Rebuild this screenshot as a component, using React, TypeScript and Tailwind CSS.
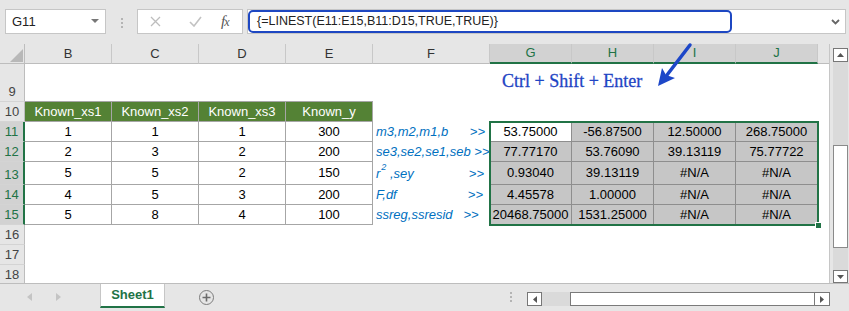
const cols = [
  { key: "B", w: "w-[87px]", sel: false },
  { key: "C", w: "w-[87px]", sel: false },
  { key: "D", w: "w-[87px]", sel: false },
  { key: "E", w: "w-[87px]", sel: false },
  { key: "F", w: "w-[117px]", sel: false },
  { key: "G", w: "w-[82px]", sel: true },
  { key: "H", w: "w-[82px]", sel: true },
  { key: "I", w: "w-[82px]", sel: true },
  { key: "J", w: "w-[82px]", sel: true },
];

type DataRow = {
  n: string;
  h: string;
  known: number[];
  label: React.ReactNode;
  result: string[];
};

const dataRows: DataRow[] = [
  {
    n: "11",
    h: "h-[20px]",
    known: [1, 1, 1, 300],
    label: (
      <div className="flex w-full justify-between pl-[3px] pr-[5px]">
        <span>m3,m2,m1,b</span>
        <span>&gt;&gt;</span>
      </div>
    ),
    result: ["53.75000", "-56.87500", "12.50000", "268.75000"],
  },
  {
    n: "12",
    h: "h-[20px]",
    known: [2, 3, 2, 200],
    label: <span className="pl-[3px]">se3,se2,se1,seb &gt;&gt;</span>,
    result: ["77.77170", "53.76090", "39.13119", "75.77722"],
  },
  {
    n: "13",
    h: "h-[23px]",
    known: [5, 5, 2, 150],
    label: (
      <div className="flex w-full justify-between pl-[3px] pr-[6px]">
        <span>
          r<span className="inline-block align-top text-[9px] leading-[9px] -mt-[1px] ml-[1px]">2</span> ,sey
        </span>
        <span>&gt;&gt;</span>
      </div>
    ),
    result: ["0.93040", "39.13119", "#N/A", "#N/A"],
  },
  {
    n: "14",
    h: "h-[20px]",
    known: [4, 5, 3, 200],
    label: (
      <div className="flex w-full justify-between pl-[3px] pr-[7px]">
        <span>F,df</span>
        <span>&gt;&gt;</span>
      </div>
    ),
    result: ["4.45578", "1.00000", "#N/A", "#N/A"],
  },
  {
    n: "15",
    h: "h-[20px]",
    known: [5, 8, 4, 100],
    label: <span className="pl-[3px] whitespace-pre">ssreg,ssresid   &gt;&gt;</span>,
    result: ["20468.75000", "1531.25000", "#N/A", "#N/A"],
  },
];

const RowHead = ({ n, sel }: { n: string; sel?: boolean }) => (
  <div
    className={`w-[25px] shrink-0 h-full flex items-end justify-center pb-[2px] border-b border-b-[#d4d4d4] text-[13px] leading-[15px] ${
      sel
        ? "border-r-2 border-r-[#217346] bg-[#d2d2d2] text-[#217346]"
        : "border-r border-r-[#bdbdbd] bg-[#e6e6e6] text-[#444]"
    }`}
  >
    {n}
  </div>
);

const App = () => {
  return (
    <div className="relative w-[849px] h-[311px] overflow-hidden bg-[#e6e6e6] font-['Liberation_Sans',Arial,sans-serif] text-black">
      {/* formula bar */}
      <div className="h-[44px] flex items-start pt-[9px]">
        <div className="ml-[5px] w-[101px] h-[25px] bg-white border border-[#c6c6c6] flex items-center justify-between pl-[6px] pr-[6px]">
          <span className="text-[13px] text-[#222]">G11</span>
          <svg width="8" height="5" viewBox="0 0 8 5">
            <polygon points="0,0 8,0 4,4" fill="#777" />
          </svg>
        </div>
        <div className="ml-[15px] mt-[9px] flex flex-col gap-[2px]">
          <div className="w-[2px] h-[2px] bg-[#b4b4b4]" />
          <div className="w-[2px] h-[2px] bg-[#b4b4b4]" />
          <div className="w-[2px] h-[2px] bg-[#b4b4b4]" />
        </div>
        <div className="ml-[14px] w-[106px] h-[25px] bg-white border border-[#c6c6c6] flex items-center">
          <svg className="ml-[12px]" width="11" height="11" viewBox="0 0 11 11">
            <path d="M1 1 L10 10 M10 1 L1 10" stroke="#bdbdbd" strokeWidth="1.3" fill="none" />
          </svg>
          <svg className="ml-[28px]" width="13" height="11" viewBox="0 0 13 11">
            <path d="M1 6 L5 10 L12 1" stroke="#c2c2c2" strokeWidth="1.6" fill="none" />
          </svg>
          <span className="ml-[19px] italic font-['Liberation_Serif',serif] text-[15px] text-[#555] tracking-[-1px]">
            f<span className="text-[12px]">x</span>
          </span>
        </div>
        <div className="ml-[4px] w-[599px] h-[25px] bg-white border border-[#c6c6c6] flex items-center">
          <div className="w-[484px] h-[23px] border-2 border-[#1d47c2] rounded-[5px] flex items-center pl-[7px]">
            <span className="text-[12.5px] text-[#222]">
              {"{=LINEST(E11:E15,B11:D15,TRUE,TRUE)}"}
            </span>
          </div>
          <svg className="ml-auto mr-[5px]" width="9" height="6" viewBox="0 0 9 6">
            <path d="M1 1 L4.5 4.5 L8 1" stroke="#666" strokeWidth="1.8" fill="none" />
          </svg>
        </div>
      </div>

      {/* sheet */}
      <div className="flex h-[239px]">
        <div className="relative w-[830px] h-full bg-white border-r border-[#c6c6c6] overflow-hidden">
          {/* column headers */}
          <div className="flex h-[20px] bg-[#e6e6e6]">
            <div className="w-[25px] shrink-0 flex items-end justify-end border-r border-b border-[#bdbdbd] pr-[1px] pb-[1px]">
              <svg width="13" height="13" viewBox="0 0 13 13">
                <polygon points="13,0 13,13 0,13" fill="#b8b8b8" />
              </svg>
            </div>
            {cols.map((c) => (
              <div
                key={c.key}
                className={`${c.w} shrink-0 flex items-center justify-center border-r border-r-[#c8c8c8] text-[13px] ${
                  c.sel
                    ? "border-b-2 border-b-[#217346] bg-[#d2d2d2] text-[#217346]"
                    : "border-b border-b-[#bdbdbd] text-[#333]"
                }`}
              >
                {c.key}
              </div>
            ))}
            <div className="flex-1 border-b border-[#bdbdbd]" />
          </div>

          {/* row 9 */}
          <div className="flex h-[38px]">
            <RowHead n="9" />
            <div className="w-[348px] h-full border-b border-[#a6a6a6]" />
          </div>

          {/* row 10 */}
          <div className="flex h-[20px]">
            <RowHead n="10" />
            {["Known_xs1", "Known_xs2", "Known_xs3", "Known_y"].map((t) => (
              <div
                key={t}
                className="w-[87px] shrink-0 h-full flex items-center justify-center border-r border-b border-[#a6a6a6] bg-[#548235] text-white text-[13px]"
              >
                {t}
              </div>
            ))}
          </div>

          {dataRows.map((r) => (
            <div key={r.n} className={`flex ${r.h}`}>
              <RowHead n={r.n} sel />
              {r.known.map((v, i) => (
                <div
                  key={i}
                  className="w-[87px] shrink-0 h-full flex items-center justify-center border-r border-b border-[#a6a6a6] text-[13px]"
                >
                  {v}
                </div>
              ))}
              <div className="w-[117px] shrink-0 h-full flex items-center italic text-[13px] text-[#0070c0] whitespace-nowrap">
                {r.label}
              </div>
              {r.result.map((v, i) => (
                <div
                  key={i}
                  className={`w-[82px] shrink-0 h-full flex items-center justify-center border-r border-b border-[#8e8e8e] text-[13px] ${
                    r.n === "11" && i === 0 ? "bg-white" : "bg-[#c6c6c6]"
                  }`}
                >
                  {v}
                </div>
              ))}
            </div>
          ))}

          {["16", "17"].map((n) => (
            <div key={n} className="flex h-[20px]">
              <RowHead n={n} />
            </div>
          ))}
          <div className="flex h-[20px]">
            <RowHead n="18" />
          </div>

          {/* selection outline */}
          <div className="absolute left-[489px] top-[77px] w-[330px] h-[105px] border-2 border-[#217346]" />
          <div className="absolute left-[815px] top-[178px] w-[7px] h-[7px] bg-[#217346] border border-white" />
        </div>

        {/* vertical scrollbar */}
        <div className="w-[19px] h-full pl-[3px] flex flex-col">
          <div className="mt-[4px] w-[15px] h-[14px] bg-white border border-[#777] flex items-center justify-center">
            <svg width="7" height="4" viewBox="0 0 7 4">
              <polygon points="0,4 7,4 3.5,0" fill="#555" />
            </svg>
          </div>
          <div className="w-[15px] h-[83px] bg-[#dadada]" />
          <div className="w-[15px] h-[103px] bg-white border border-[#8a8a8a]" />
          <div className="w-[15px] h-[22px] bg-[#dadada]" />
          <div className="w-[15px] h-[13px] bg-white border border-[#777] flex items-center justify-center">
            <svg width="7" height="4" viewBox="0 0 7 4">
              <polygon points="0,0 7,0 3.5,4" fill="#555" />
            </svg>
          </div>
        </div>
      </div>

      {/* sheet tabs */}
      <div className="h-[28px] border-t border-[#bdbdbd] flex items-start">
        <div className="w-[100px] h-full flex items-center pb-[2px]">
          <svg className="ml-[27px]" width="5" height="8" viewBox="0 0 5 8">
            <polygon points="5,0 5,8 0,4" fill="#c4c4c4" />
          </svg>
          <svg className="ml-[24px]" width="5" height="8" viewBox="0 0 5 8">
            <polygon points="0,0 0,8 5,4" fill="#c4c4c4" />
          </svg>
        </div>
        <div className="w-[65px] h-[24px] bg-white border-x border-[#c6c6c6] border-b-2 border-b-[#217346] flex items-center justify-center">
          <span className="text-[13px] font-bold text-[#217346]">Sheet1</span>
        </div>
        <div className="ml-[34px] mt-[6px] w-[15px] h-[15px] rounded-full border-[1.5px] border-[#7c7c7c] flex items-center justify-center">
          <svg width="9" height="9" viewBox="0 0 9 9">
            <path d="M4.5 0.5 V8.5 M0.5 4.5 H8.5" stroke="#6c6c6c" strokeWidth="1.6" />
          </svg>
        </div>
        <div className="ml-[296px] mt-[8px] flex flex-col gap-[2px]">
          <div className="w-[2px] h-[2px] bg-[#b4b4b4]" />
          <div className="w-[2px] h-[2px] bg-[#b4b4b4]" />
          <div className="w-[2px] h-[2px] bg-[#b4b4b4]" />
        </div>
        <div className="ml-[15px] mt-[8px] flex h-[14px]">
          <div className="w-[15px] h-full bg-white border border-[#777] flex items-center justify-center">
            <svg width="4" height="7" viewBox="0 0 4 7">
              <polygon points="4,0 4,7 0,3.5" fill="#555" />
            </svg>
          </div>
          <div className="w-[28px] h-full bg-[#dadada]" />
          <div className="w-[245px] h-full bg-white border border-[#7a7a7a]" />
          <div className="w-[15px] h-full bg-white border border-l-0 border-[#777] flex items-center justify-center">
            <svg width="4" height="7" viewBox="0 0 4 7">
              <polygon points="0,0 0,7 4,3.5" fill="#555" />
            </svg>
          </div>
        </div>
      </div>

      {/* annotation */}
      <div className="absolute left-[502px] top-[72px] font-['Liberation_Serif',serif] text-[18px] leading-[18px] text-[#1f45c4] whitespace-nowrap [-webkit-text-stroke:0.3px_#1f45c4]">
        Ctrl + Shift + Enter
      </div>
      <svg className="absolute left-0 top-0 pointer-events-none" width="849" height="311" viewBox="0 0 849 311">
        <line x1="690" y1="45" x2="667" y2="75" stroke="#1d47c8" strokeWidth="3.5" strokeLinecap="round" />
        <polygon points="658,86 662,68 666,75 675,78" fill="#1d47c8" />
      </svg>
    </div>
  );
};

export default App;
